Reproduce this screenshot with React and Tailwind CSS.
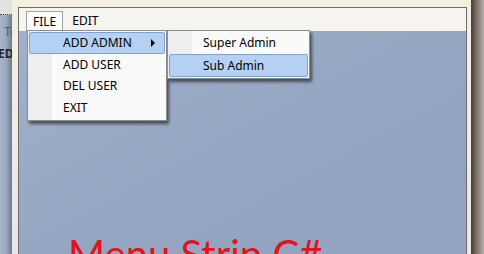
export default function App() {
    return (
        <div className="relative w-[484px] h-[254px] overflow-hidden flex font-['Noto_Sans',sans-serif] text-[12px] text-black">
            {/* Window behind the form */}
            <div className="w-[12px] shrink-0 flex flex-col overflow-hidden bg-gradient-to-r from-[#a8b4c9] via-[#9ca9c0] to-[#6c7a92]">
                <div className="h-[15px] shrink-0 bg-[#e2e2e0] border-b border-dotted border-[#444]" />
                <div className="pt-[10px] pl-[4px] leading-none text-[13px] text-[#5a5a5a] whitespace-nowrap">Te</div>
                <div className="pt-[10px] -ml-[2px] leading-none text-[12px] font-bold text-[#222] whitespace-nowrap">EDIT</div>
            </div>

            {/* Form frame */}
            <div className="flex-1 flex flex-col pt-[7px] pl-[6px] pr-[4px] bg-gradient-to-b from-[#f5f0e0] via-[#eeece6] to-[#e6e8ec]">
                <div className="flex-1 flex flex-col border-x border-t border-[#6e6e6e]">
                    {/* Menu strip */}
                    <div className="h-[23px] shrink-0 bg-[#f5f4f1] flex items-end pl-[7px]">
                        <div className="h-[20px] px-[6px] border-x border-t border-[#a3a3a3] bg-[#fcfcfc] flex items-center">
                            FILE
                        </div>
                        <div className="h-[20px] px-[9px] flex items-center">EDIT</div>
                    </div>

                    {/* Client area */}
                    <div className="flex-1 bg-gradient-to-br from-[#a1b1cb] via-[#95a6c2] to-[#92a3bf] pt-[203px] pl-[49px]">
                        <span className="block leading-none whitespace-nowrap text-[40px] text-[#e3121b] font-['Lato',sans-serif]">
                            Menu Strip C#
                        </span>
                    </div>
                </div>
            </div>

            {/* Shadow of the window on the right */}
            <div className="w-[13px] shrink-0 bg-gradient-to-r from-[#4b3d34] via-[#857a71] to-[#b7b0a9]" />

            {/* FILE dropdown */}
            <div className="absolute left-[27px] top-[30px] w-[140px] h-[91px] p-[1px] flex flex-col border border-[#8e8e8e] bg-[linear-gradient(to_right,#eeeeee_24px,#fafafa_24px)] shadow-[2px_3px_3px_rgba(0,0,0,0.55)]">
                <div className="h-[22px] flex items-center justify-between pl-[33px] pr-[9px] border border-[#7ea3d2] bg-[#b4d0f3] rounded-[2px]">
                    <span>ADD ADMIN</span>
                    <span className="w-0 h-0 border-y-[4px] border-y-transparent border-l-[4px] border-l-black" />
                </div>
                <div className="h-[22px] flex items-center pl-[34px]">ADD USER</div>
                <div className="h-[22px] flex items-center pl-[34px]">DEL USER</div>
                <div className="h-[22px] flex items-center pl-[34px]">EXIT</div>
            </div>

            {/* ADD ADMIN submenu */}
            <div className="absolute left-[167px] top-[30px] w-[143px] h-[49px] p-[1px] flex flex-col border border-[#8e8e8e] bg-[linear-gradient(to_right,#eeeeee_24px,#fafafa_24px)] shadow-[2px_3px_3px_rgba(0,0,0,0.55)]">
                <div className="h-[22px] flex items-center pl-[34px]">Super Admin</div>
                <div className="h-[23px] flex items-center pl-[33px] border border-[#7ea3d2] bg-[#b4d0f3] rounded-[2px]">
                    Sub Admin
                </div>
            </div>
        </div>
    );
}
